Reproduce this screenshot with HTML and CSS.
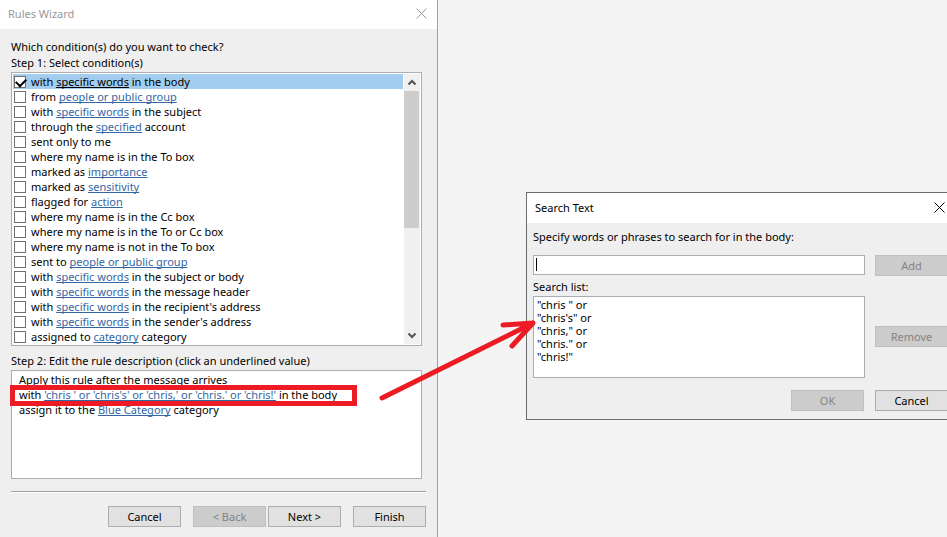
FILE: index.html
```
<!DOCTYPE html>
<html lang="en">
<head>
  <meta charset="UTF-8">
  <title>Rules Wizard</title>
  <link rel="stylesheet" href="styles.css">
</head>
<body>

<div class="desktop">
  <section class="window wizard">
    <header class="titlebar inactive">
      <h1>Rules Wizard</h1>
      <button class="close" aria-label="Close">
        <svg width="11" height="11" viewBox="0 0 11 11"><path d="M.5.5l10 10M10.500.5l-10 10"/></svg>
      </button>
    </header>

    <div class="wizard-body">
      <p class="question">Which condition(s) do you want to check?</p>
      <p class="step">Step 1: Select condition(s)</p>
      <div class="box conditions">
        <ul>
          <li class="selected"><input type="checkbox" id="c1" checked><label for="c1">with <a href="#">specific words</a> in the body</label></li>
          <li><input type="checkbox" id="c2"><label for="c2">from <a href="#">people or public group</a></label></li>
          <li><input type="checkbox" id="c3"><label for="c3">with <a href="#">specific words</a> in the subject</label></li>
          <li><input type="checkbox" id="c4"><label for="c4">through the <a href="#">specified</a> account</label></li>
          <li><input type="checkbox" id="c5"><label for="c5">sent only to me</label></li>
          <li><input type="checkbox" id="c6"><label for="c6">where my name is in the To box</label></li>
          <li><input type="checkbox" id="c7"><label for="c7">marked as <a href="#">importance</a></label></li>
          <li><input type="checkbox" id="c8"><label for="c8">marked as <a href="#">sensitivity</a></label></li>
          <li><input type="checkbox" id="c9"><label for="c9">flagged for <a href="#">action</a></label></li>
          <li><input type="checkbox" id="c10"><label for="c10">where my name is in the Cc box</label></li>
          <li><input type="checkbox" id="c11"><label for="c11">where my name is in the To or Cc box</label></li>
          <li><input type="checkbox" id="c12"><label for="c12">where my name is not in the To box</label></li>
          <li><input type="checkbox" id="c13"><label for="c13">sent to <a href="#">people or public group</a></label></li>
          <li><input type="checkbox" id="c14"><label for="c14">with <a href="#">specific words</a> in the subject or body</label></li>
          <li><input type="checkbox" id="c15"><label for="c15">with <a href="#">specific words</a> in the message header</label></li>
          <li><input type="checkbox" id="c16"><label for="c16">with <a href="#">specific words</a> in the recipient's address</label></li>
          <li><input type="checkbox" id="c17"><label for="c17">with <a href="#">specific words</a> in the sender's address</label></li>
          <li><input type="checkbox" id="c18"><label for="c18">assigned to <a href="#">category</a> category</label></li>
        </ul>
        <div class="scrollbar">
          <button aria-label="Scroll up"><svg width="8" height="7" viewBox="0 0 8 7"><path d="M.5 5.500L4 2l3.500 3.500"/></svg></button>
          <div class="track"><div class="thumb"></div></div>
          <button aria-label="Scroll down"><svg width="8" height="7" viewBox="0 0 8 7"><path d="M.5 1.500L4 5l3.500-3.500"/></svg></button>
        </div>
      </div>

      <p class="step step-two">Step 2: Edit the rule description (click an underlined value)</p>
      <div class="box description">
        <p>Apply this rule after the message arrives</p>
        <p><span class="marked">with <a href="#">'chris ' or 'chris's' or 'chris,' or 'chris.' or 'chris!'</a> in the body</span></p>
        <p>assign it to the <a href="#">Blue Category</a> category</p>
      </div>

      <footer class="wizard-buttons">
        <button class="btn">Cancel</button>
        <div class="pair">
          <button class="btn" disabled>&lt; Back</button>
          <button class="btn">Next &gt;</button>
        </div>
        <button class="btn">Finish</button>
      </footer>
    </div>
  </section>

  <section class="window search">
    <header class="titlebar">
      <h2>Search Text</h2>
      <button class="close" aria-label="Close">
        <svg width="11" height="11" viewBox="0 0 11 11"><path d="M.5.5l10 10M10.500.5l-10 10"/></svg>
      </button>
    </header>

    <div class="search-body">
      <label class="prompt" for="phrase">Specify words or phrases to search for in the body:</label>
      <div class="field"><input class="box" type="text" id="phrase"></div>
      <button class="btn" disabled>Add</button>
      <p class="list-label" id="listLabel">Search list:</p>
      <ul class="box phrases" aria-labelledby="listLabel">
        <li>"chris " or</li>
        <li>"chris's" or</li>
        <li>"chris," or</li>
        <li>"chris." or</li>
        <li>"chris!"</li>
      </ul>
      <button class="btn remove" disabled>Remove</button>
      <button class="btn ok" disabled>OK</button>
      <button class="btn cancel">Cancel</button>
    </div>
  </section>

  <!-- arrow from the rule to the search list -->
  <svg class="arrow" width="160" height="90" viewBox="0 0 160 90">
    <path d="M4 82L155 7M125 9l30-2-21 23"/>
  </svg>
</div>

</body>
</html>
```

FILE: styles.css
```
* {
  box-sizing: border-box;
}

body {
  margin: 0;
  background: #f4f4f4;
  color: #000;
  font: 11px/15px "Noto Sans", "Open Sans", sans-serif;
}

h1, h2, p, ul {
  margin: 0;
  padding: 0;
  font-size: 11px;
  font-weight: normal;
  list-style: none;
}

a {
  color: #3566a3;
  text-underline-offset: 1px;
  text-decoration-skip-ink: none;
}

button, input {
  font: inherit;
  color: inherit;
}

.desktop {
  position: relative;
  display: flex;
  align-items: flex-start;
  gap: 88px;
  min-height: 100vh;
  overflow: hidden;
}

.window {
  background: #efefef;
}

.titlebar {
  display: flex;
  align-items: center;
  justify-content: space-between;
  background: #fff;
}

.titlebar.inactive {
  color: #999;
}

.close {
  display: flex;
  padding: 0;
  border: none;
  background: none;
}

.close path {
  fill: none;
  stroke: currentColor;
}

.box {
  border: 1px solid #abadb3;
  background: #fff;
}

.btn {
  width: 73px;
  height: 21px;
  padding: 0;
  border: 1px solid #adadad;
  background: #e1e1e1;
  line-height: 19px;
}

.btn:disabled {
  border-color: #bfbfbf;
  background: #ccc;
  color: #838383;
}

/* rules wizard */
.wizard {
  flex: 1 1 438px;
  align-self: stretch;
  border-right: 1px solid #a0a0a0;
}

.wizard .titlebar {
  height: 29px;
  padding: 0 10px 2px 8px;
}

.wizard-body {
  padding: 10px 11px;
}

.question {
  margin-bottom: 1px;
}

.step {
  margin-bottom: 2px;
}

.conditions {
  display: flex;
  margin-right: 4px;
  padding: 1px;
}

.conditions ul {
  flex: 1;
}

.conditions li {
  display: flex;
  align-items: center;
  gap: 5px;
  height: 15px;
  padding-left: 1px;
}

.conditions .selected {
  background: #a3cdef;
}

.conditions .selected a {
  color: #000;
}

.conditions input {
  appearance: none;
  width: 12px;
  height: 12px;
  margin: 0;
  border: 1px solid #707070;
  background: #fff;
}

.conditions input:checked::before {
  content: "";
  display: block;
  width: 8px;
  height: 5px;
  margin: 0 1px;
  border: solid #000;
  border-width: 0 0 2px 2px;
  transform: translateY(1px) rotate(-45deg);
}

.scrollbar {
  display: flex;
  flex-direction: column;
  width: 16px;
  margin-left: 1px;
  background: #f0f0f0;
}

.scrollbar button {
  display: flex;
  align-items: center;
  justify-content: center;
  height: 17px;
  padding: 0;
  border: none;
  background: none;
}

.scrollbar path {
  fill: none;
  stroke: #555;
  stroke-width: 2;
}

.track {
  flex: 1;
}

.thumb {
  width: 15px;
  height: 58%;
  background: #cdcdcd;
}

.step-two {
  margin-top: 7px;
}

.description {
  min-height: 109px;
  margin-right: 4px;
  padding: 1px 7px;
}

.marked {
  position: relative;
}

.marked::after {
  content: "";
  position: absolute;
  inset: -2px -20px -4px -9px;
  border: 5px solid #ed1c24;
}

.wizard-buttons {
  display: flex;
  justify-content: flex-end;
  gap: 12px;
  margin-top: 12px;
  padding-top: 14px;
  border-top: 1px solid #a0a0a0;
  box-shadow: inset 0 1px #fff;
}

.pair {
  display: flex;
  gap: 2px;
}

/* search text */
.search {
  flex: 1 1 431px;
  margin: 192px -10px 0 0;
  border: 1px solid #6b6b6b;
}

.search .titlebar {
  height: 30px;
  padding: 0 11px 2px 8px;
}

.search-body {
  display: grid;
  grid-template-columns: 1fr 74px 73px;
  column-gap: 10px;
  padding: 6px 8px 8px 6px;
}

.prompt {
  grid-column: 1 / -1;
  margin-bottom: 11px;
}

.field {
  position: relative;
  grid-column: 1 / 3;
}

.field input {
  display: block;
  width: 100%;
  height: 20px;
  padding: 0 3px;
}

/* text caret */
.field::before {
  content: "";
  position: absolute;
  top: 3px;
  left: 3px;
  width: 1px;
  height: 13px;
  background: #000;
}

.list-label {
  grid-column: 1 / -1;
  margin: 3px 0 2px;
}

.phrases {
  grid-column: 1 / 3;
  min-height: 82px;
  padding: 1px 3px;
  line-height: 13px;
}

.remove {
  margin-top: 30px;
}

.ok, .cancel {
  margin-top: 12px;
}

.ok {
  grid-column: 2;
}

.arrow {
  position: absolute;
  top: 316px;
  left: 378px;
}

.arrow path {
  fill: none;
  stroke: #ed1c24;
  stroke-width: 5;
  stroke-linecap: round;
  stroke-linejoin: round;
}
```
